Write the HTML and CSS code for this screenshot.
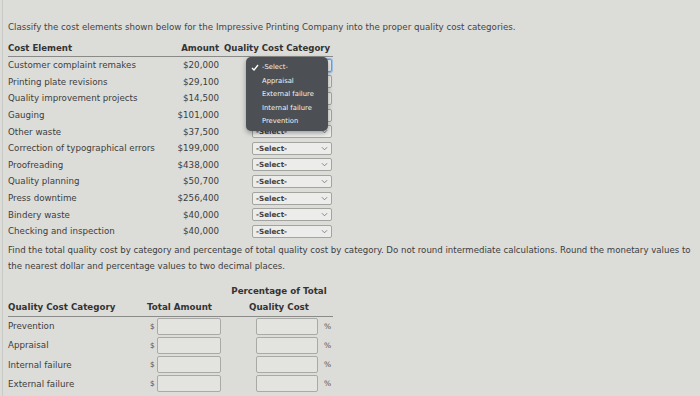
FILE: index.html
```html
<!DOCTYPE html>
<html>
<head>
<meta charset="utf-8">
<link rel="stylesheet" href="styles.css">
</head>
<body>
<div class="page">
  <p class="intro">Classify the cost elements shown below for the Impressive Printing Company into the proper quality cost categories.</p>

  <div class="t1">
    <div class="t1-row head">
      <div class="c-name">Cost Element</div>
      <div class="c-amt">Amount</div>
      <div class="c-cat">Quality Cost Category</div>
    </div>
    <div class="t1-row"><div class="c-name">Customer complaint remakes</div><div class="c-amt">$20,000</div><div class="c-cat"><div class="sel focus"><span>-Select-</span><svg viewBox="0 0 8 5"><path d="M1 1l3 3 3-3"/></svg></div></div></div>
    <div class="t1-row"><div class="c-name">Printing plate revisions</div><div class="c-amt">$29,100</div><div class="c-cat"><div class="sel"><span>-Select-</span><svg viewBox="0 0 8 5"><path d="M1 1l3 3 3-3"/></svg></div></div></div>
    <div class="t1-row"><div class="c-name">Quality improvement projects</div><div class="c-amt">$14,500</div><div class="c-cat"><div class="sel"><span>-Select-</span><svg viewBox="0 0 8 5"><path d="M1 1l3 3 3-3"/></svg></div></div></div>
    <div class="t1-row"><div class="c-name">Gauging</div><div class="c-amt">$101,000</div><div class="c-cat"><div class="sel"><span>-Select-</span><svg viewBox="0 0 8 5"><path d="M1 1l3 3 3-3"/></svg></div></div></div>
    <div class="t1-row"><div class="c-name">Other waste</div><div class="c-amt">$37,500</div><div class="c-cat"><div class="sel"><span>-Select-</span><svg viewBox="0 0 8 5"><path d="M1 1l3 3 3-3"/></svg></div></div></div>
    <div class="t1-row"><div class="c-name">Correction of typographical errors</div><div class="c-amt">$199,000</div><div class="c-cat"><div class="sel"><span>-Select-</span><svg viewBox="0 0 8 5"><path d="M1 1l3 3 3-3"/></svg></div></div></div>
    <div class="t1-row"><div class="c-name">Proofreading</div><div class="c-amt">$438,000</div><div class="c-cat"><div class="sel"><span>-Select-</span><svg viewBox="0 0 8 5"><path d="M1 1l3 3 3-3"/></svg></div></div></div>
    <div class="t1-row"><div class="c-name">Quality planning</div><div class="c-amt">$50,700</div><div class="c-cat"><div class="sel"><span>-Select-</span><svg viewBox="0 0 8 5"><path d="M1 1l3 3 3-3"/></svg></div></div></div>
    <div class="t1-row"><div class="c-name">Press downtime</div><div class="c-amt">$256,400</div><div class="c-cat"><div class="sel"><span>-Select-</span><svg viewBox="0 0 8 5"><path d="M1 1l3 3 3-3"/></svg></div></div></div>
    <div class="t1-row"><div class="c-name">Bindery waste</div><div class="c-amt">$40,000</div><div class="c-cat"><div class="sel"><span>-Select-</span><svg viewBox="0 0 8 5"><path d="M1 1l3 3 3-3"/></svg></div></div></div>
    <div class="t1-row"><div class="c-name">Checking and inspection</div><div class="c-amt">$40,000</div><div class="c-cat"><div class="sel"><span>-Select-</span><svg viewBox="0 0 8 5"><path d="M1 1l3 3 3-3"/></svg></div></div></div>

    <ul class="menu">
      <li class="checked"><svg class="check" viewBox="0 0 8 7"><path d="M1 4l2 2 4-5"/></svg>-Select-</li>
      <li>Appraisal</li>
      <li>External failure</li>
      <li>Internal failure</li>
      <li>Prevention</li>
    </ul>
  </div>

  <p class="instr">Find the total quality cost by category and percentage of total quality cost by category. Do not round intermediate calculations. Round the monetary values to the nearest dollar and percentage values to two decimal places.</p>

  <div class="t2">
    <div class="t2-row head">
      <div class="d-name">Quality Cost Category</div>
      <div class="d-amt">Total Amount</div>
      <div class="d-pct">Percentage of Total<br>Quality Cost</div>
    </div>
    <div class="t2-row"><div class="d-name">Prevention</div><div class="d-amt"><span class="cur">$</span><span class="box b1"></span></div><div class="d-pct"><span class="box b2"></span><span class="pc">%</span></div></div>
    <div class="t2-row"><div class="d-name">Appraisal</div><div class="d-amt"><span class="cur">$</span><span class="box b1"></span></div><div class="d-pct"><span class="box b2"></span><span class="pc">%</span></div></div>
    <div class="t2-row"><div class="d-name">Internal failure</div><div class="d-amt"><span class="cur">$</span><span class="box b1"></span></div><div class="d-pct"><span class="box b2"></span><span class="pc">%</span></div></div>
    <div class="t2-row"><div class="d-name">External failure</div><div class="d-amt"><span class="cur">$</span><span class="box b1"></span></div><div class="d-pct"><span class="box b2"></span><span class="pc">%</span></div></div>
  </div>
</div>
</body>
</html>
```

FILE: styles.css
```css
html, body {
  margin: 0;
  padding: 0;
  background: #dcdcd8;
}
body {
  font-family: "DejaVu Sans", Verdana, sans-serif;
  font-size: 8.7px;
  color: #3c3c3c;
  width: 700px;
  height: 396px;
  overflow: hidden;
}
.page {
  margin-left: 2px;
  border-left: 1px solid #c9c9c5;
  padding: 21px 0 0 5px;
  height: 375px;
}
.intro {
  margin: 0;
  line-height: 12px;
  font-size: 8.7px;
  color: #444;
}

/* Table 1 */
.t1 {
  position: relative;
  width: 325px;
  margin-top: 7px;
}
.t1-row {
  display: grid;
  grid-template-columns: 160px 51px 114px;
  align-items: center;
  height: 16.6px;
}
.t1-row.head {
  height: 16px;
  border-bottom: 1px solid #8a8a88;
  font-weight: bold;
  color: #333;
  font-size: 8.6px;
}
.c-amt {
  text-align: right;
}
.c-cat {
  padding-left: 5px;
  white-space: nowrap;
}
.sel {
  margin-left: 28px;
  width: 80px;
  height: 13px;
  border: 1px solid #a3a3a0;
  border-radius: 2px;
  background: #ececea;
  display: flex;
  align-items: center;
  justify-content: space-between;
  padding: 0 3px 0 3px;
  box-sizing: border-box;
  font-size: 7.2px;
  font-weight: bold;
  color: #444;
}
.sel.focus {
  border-color: #6d9fd6;
  box-shadow: 0 0 0 1px #9cc0e6;
}
.sel svg {
  width: 7px;
  height: 5px;
  fill: none;
  stroke: #7a7a78;
  stroke-width: 1;
}
.menu {
  position: absolute;
  left: 238px;
  top: 17px;
  width: 82px;
  height: 74px;
  margin: 0;
  padding: 3px 0 0 0;
  box-sizing: border-box;
  list-style: none;
  background: #4c4f53;
  border-radius: 5px;
  box-shadow: 0 2px 5px rgba(0,0,0,0.35);
  color: #f2f2f2;
  font-size: 6.8px;
}
.menu li {
  height: 13.6px;
  line-height: 14px;
  padding-left: 16px;
  position: relative;
}
.menu .check {
  position: absolute;
  left: 5px;
  top: 4px;
  width: 8px;
  height: 7px;
  fill: none;
  stroke: #fff;
  stroke-width: 1.4;
}

/* instructions */
.instr {
  margin: 2px 0 0 0;
  line-height: 16.5px;
  font-size: 8.6px;
  width: 692px;
  color: #3c3c3c;
}

/* Table 2 */
.t2 {
  width: 325px;
  margin-top: 8px;
}
.t2-row {
  display: grid;
  grid-template-columns: 139px 78px 108px;
  align-items: center;
  height: 19.2px;
}
.t2-row.head {
  height: 34px;
  align-items: end;
  border-bottom: 1px solid #8a8a88;
  font-weight: bold;
  color: #333;
  font-size: 8.7px;
  padding-bottom: 2px;
  box-sizing: border-box;
  line-height: 16px;
}
.head .d-pct {
  text-align: center;
}
.d-amt, .t2-row:not(.head) .d-pct {
  display: flex;
  align-items: center;
}
.cur {
  width: 10px;
  padding-left: 3px;
  box-sizing: border-box;
  color: #555;
  font-size: 7.5px;
}
.box {
  display: block;
  height: 17px;
  border: 1px solid #a9a9a6;
  border-radius: 2px;
  background: #e3e3e0;
  box-sizing: border-box;
}
.b1 { width: 64px; }
.b2 { width: 62px; margin-left: 31px; }
.pc {
  margin-left: 6px;
  font-size: 7.5px;
  color: #555;
}
```
